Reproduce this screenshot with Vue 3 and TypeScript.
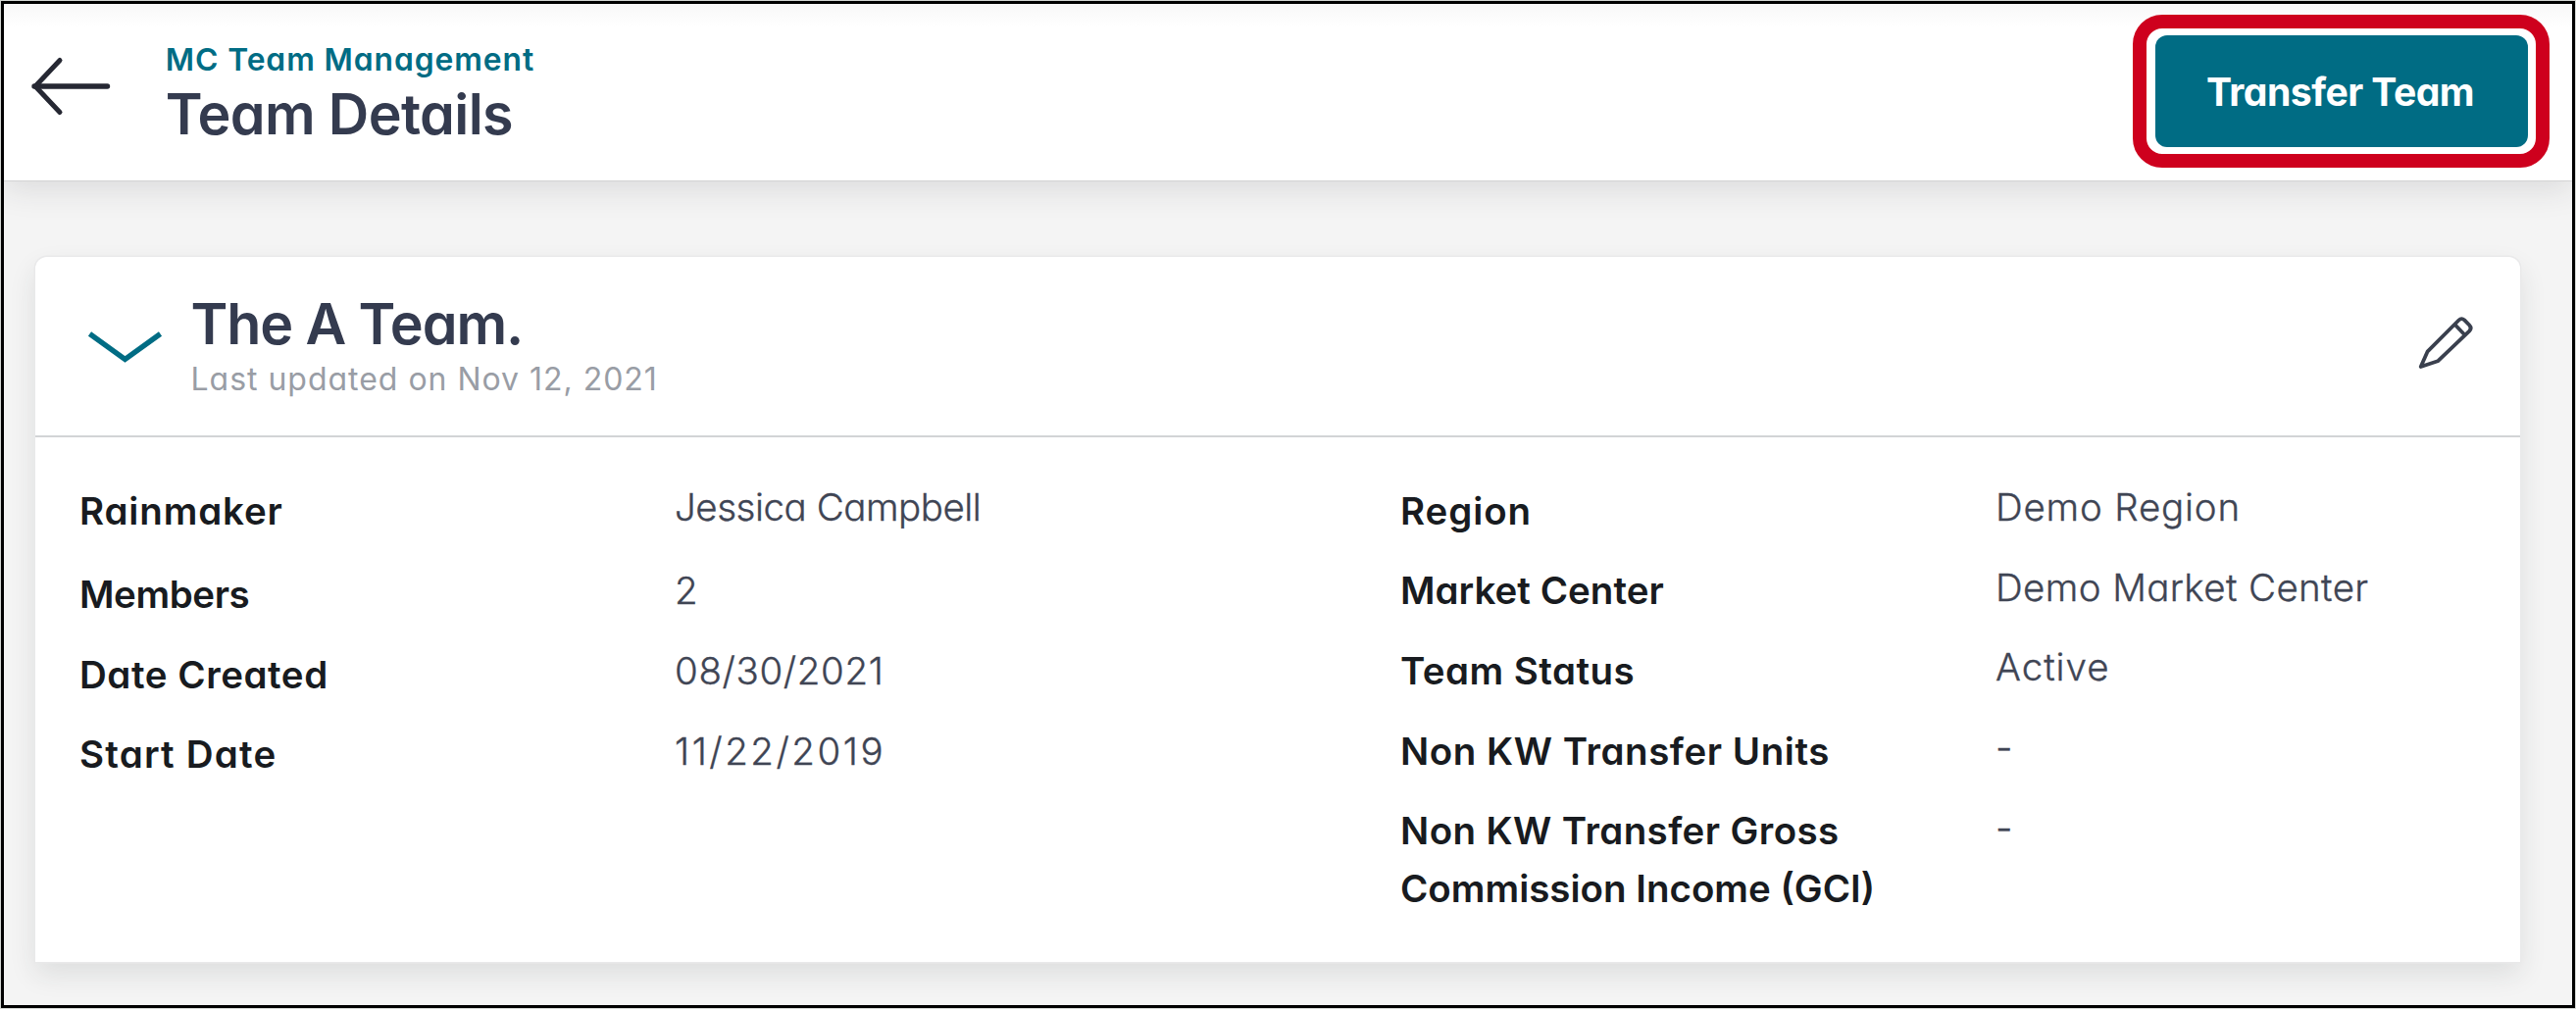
<script setup lang="ts">
interface Cell {
  text: string
  spacing: number
}
interface Field {
  label: Cell[]
  value: Cell
}

const cell = (text: string, spacing = 0): Cell => ({ text, spacing })

const columns: Field[][] = [
  [
    { label: [cell('Rainmaker', 0.84)], value: cell('Jessica Campbell', -0.47) },
    { label: [cell('Members', -0.4)], value: cell('2') },
    { label: [cell('Date Created', 0.55)], value: cell('08/30/2021', 0.6) },
    { label: [cell('Start Date', 1.2)], value: cell('11/22/2019', 2.5) },
  ],
  [
    { label: [cell('Region', 0.9)], value: cell('Demo Region', 0.8) },
    { label: [cell('Market Center', 0.02)], value: cell('Demo Market Center', 0.38) },
    { label: [cell('Team Status', 0.45)], value: cell('Active', 0.95) },
    { label: [cell('Non KW Transfer Units', 0.54)], value: cell('-') },
    {
      label: [cell('Non KW Transfer Gross', 0.4), cell('Commission Income (GCI)', 0)],
      value: cell('-'),
    },
  ],
]
</script>

<template>
  <div class="frame">
    <header class="topbar">
      <svg class="back" viewBox="0 0 84 64" fill="none" stroke-linecap="round" stroke-linejoin="round">
        <path d="M4 32H78.5" stroke-width="5.4" />
        <path d="M30 5.5L5 32L30 58.5" stroke-width="5" />
      </svg>
      <div class="heading">
        <div class="crumb">MC Team Management</div>
        <h1>Team Details</h1>
      </div>
      <div class="highlight">
        <button class="transfer" type="button">Transfer Team</button>
      </div>
    </header>

    <section class="card">
      <div class="card-head">
        <svg class="chevron" viewBox="0 0 76 36" fill="none">
          <path d="M1.5 3.5L37.5 29.5L73.5 3.5" stroke-width="5.4" />
        </svg>
        <div class="team">
          <h2>The A Team.</h2>
          <div class="updated">Last updated on Nov 12, 2021</div>
        </div>
        <svg class="pencil" viewBox="0 0 60 60" fill="none" stroke-linejoin="round">
          <path d="M4.7 54L11.7 38.3L43.5 6.5Q46.3 3.8 49.2 6.4L54.4 11.8Q57 14.8 54.2 17.6L22 48.3Z" />
          <path d="M39.5 11L49.5 21.5" />
        </svg>
      </div>
      <div class="details">
        <div v-for="(fields, c) in columns" :key="c" class="column">
          <div v-for="(field, i) in fields" :key="i" class="row">
            <div class="label">
              <div v-for="line in field.label" :key="line.text">
                <span :style="{ letterSpacing: line.spacing + 'px' }">{{ line.text }}</span>
              </div>
            </div>
            <div class="value">
              <span :style="{ letterSpacing: field.value.spacing + 'px' }">{{ field.value.text }}</span>
            </div>
          </div>
        </div>
      </div>
    </section>
  </div>
</template>

<style>
body {
  background: #d3d6d3;
}
</style>

<style scoped>
.frame {
  box-sizing: border-box;
  width: 2625px;
  height: 1027px;
  margin: 1px;
  border: 3px solid #000;
  background: #f4f4f4;
  overflow: hidden;
  font-family: Inter, "Open Sans", sans-serif;
  font-feature-settings: "cv11";
  white-space: nowrap;
}
.topbar {
  position: relative;
  box-sizing: border-box;
  display: flex;
  align-items: flex-start;
  height: 181px;
  padding: 0 23px 0 27px;
  border-bottom: 1px solid #d3d3d4;
  background: linear-gradient(#f8f8f8, #fff 24px);
  box-shadow: 0 8px 30px rgba(40, 42, 50, 0.12);
}
.back {
  width: 84px;
  height: 64px;
  margin-top: 51.5px;
  stroke: #262833;
}
.heading {
  flex: 1;
  margin: 38.7px 0 0 53.7px;
}
.crumb {
  height: 36px;
  line-height: 36px;
  font-size: 31.8px;
  font-weight: 600;
  letter-spacing: 0.92px;
  color: #006c84;
}
h1,
h2 {
  margin: 0;
  font-size: 57.4px;
  font-weight: 600;
  color: #343b4f;
}
h1 {
  height: 74px;
  line-height: 74px;
  letter-spacing: -0.62px;
}
.highlight {
  box-sizing: border-box;
  width: 425px;
  height: 156px;
  margin-top: 11px;
  padding: 7px 8.5px;
  border: 14px solid #ce001d;
  border-radius: 30px;
  background: #fff;
}
.transfer {
  width: 100%;
  height: 114px;
  padding: 1px 2px 0 0;
  border: 0;
  border-radius: 12px;
  background: #006c84;
  color: #fff;
  font: 700 39.2px Inter, "Open Sans", sans-serif;
  font-feature-settings: "cv11";
  letter-spacing: -0.54px;
}
.card {
  width: 2534px;
  height: 719px;
  margin: 77px 0 0 32px;
  border-radius: 12px 12px 0 0;
  background: #fff;
  box-shadow: 0 0 0 1.5px #e9e9ea, 0 12px 28px rgba(40, 42, 50, 0.11);
}
.card-head {
  box-sizing: border-box;
  display: flex;
  align-items: flex-start;
  height: 184px;
  padding-left: 54px;
  border-bottom: 2px solid #d2d4d6;
}
.chevron {
  width: 76px;
  height: 36px;
  margin-top: 75px;
  stroke: #006c84;
}
.team {
  flex: 1;
  margin: 31.2px 0 0 28.5px;
}
h2 {
  height: 74px;
  line-height: 74px;
  letter-spacing: -1.1px;
}
.updated {
  height: 40px;
  line-height: 40px;
  font-size: 32px;
  font-weight: 400;
  letter-spacing: 0.98px;
  color: #999da5;
}
.pencil {
  width: 60px;
  height: 60px;
  margin: 58px 46px 0 0;
  stroke: #3a404e;
  stroke-width: 3.8;
}
.details {
  display: flex;
  padding: 42px 0 0 45px;
  font-size: 38.5px;
  line-height: 58.6px;
}
.column {
  display: flex;
  flex-direction: column;
  gap: 23.1px;
  width: 1347px;
}
.row {
  display: flex;
  height: 58.6px;
}
.column:first-child .row:first-child {
  height: 62.3px;
}
.column:last-child {
  width: 1142px;
}
.label {
  width: 607px;
  padding-top: 3.7px;
  font-weight: 600;
  color: #181b20;
}
.value {
  font-weight: 300;
  color: #3f4554;
  -webkit-text-stroke: 0.35px #3f4554;
}
</style>
